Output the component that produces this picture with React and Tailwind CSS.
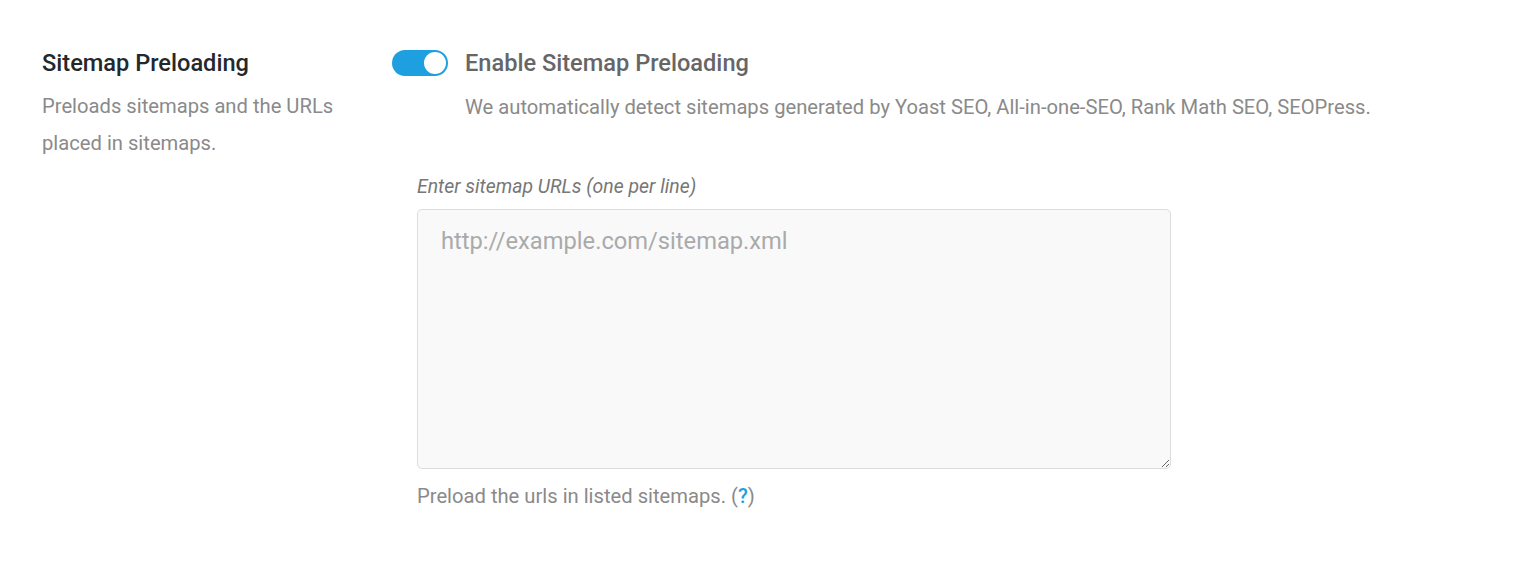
export default function App() {
  return (
    <div className="min-h-[567px] bg-white font-['Roboto',sans-serif]">
      <div className="flex pl-[42px] pt-[48px]">
        {/* left column */}
        <div className="w-[350px] shrink-0">
          <h3 className="text-[23.6px] font-medium leading-[30px] text-[#23282d]">
            Sitemap Preloading
          </h3>
          <p className="mt-[10px] w-[310px] text-[20.2px] leading-[37px] text-[#8a8a8a]">
            Preloads sitemaps and the URLs placed in sitemaps.
          </p>
        </div>

        {/* right column */}
        <div className="flex-1">
          <div className="flex items-center gap-[17px]">
            <button
              aria-label="Toggle"
              className="relative h-[26px] w-[56px] shrink-0 rounded-full bg-[#1ea0e0]"
            >
              <span className="absolute right-[2px] top-[2px] h-[22px] w-[22px] rounded-full bg-white" />
            </button>
            <span className="text-[23.6px] font-medium leading-[30px] text-[#666]">
              Enable Sitemap Preloading
            </span>
          </div>
          <p className="mt-[14px] pl-[73px] text-[20.2px] leading-[30px] text-[#8a8a8a]">
            We automatically detect sitemaps generated by Yoast SEO, All-in-one-SEO, Rank Math SEO, SEOPress.
          </p>

          <div className="mt-[52px] pl-[25px]">
            <label className="block text-[19.4px] italic leading-[26px] text-[#777]">
              Enter sitemap URLs (one per line)
            </label>
            <textarea
              placeholder="http://example.com/sitemap.xml"
              className="mt-[9px] block h-[260px] w-[754px] rounded-[5px] border border-[#dcdcdc] bg-[#f9f9f9] px-[23px] py-[16px] text-[23.7px] leading-[30px] text-[#555] placeholder:text-[#aaa] outline-none"
            />
            <p className="mt-[12px] text-[20.2px] leading-[30px] text-[#8a8a8a]">
              Preload the urls in listed sitemaps. (
              <a href="#" className="font-medium text-[#1ea0e0]">?</a>)
            </p>
          </div>
        </div>
      </div>
    </div>
  );
}
